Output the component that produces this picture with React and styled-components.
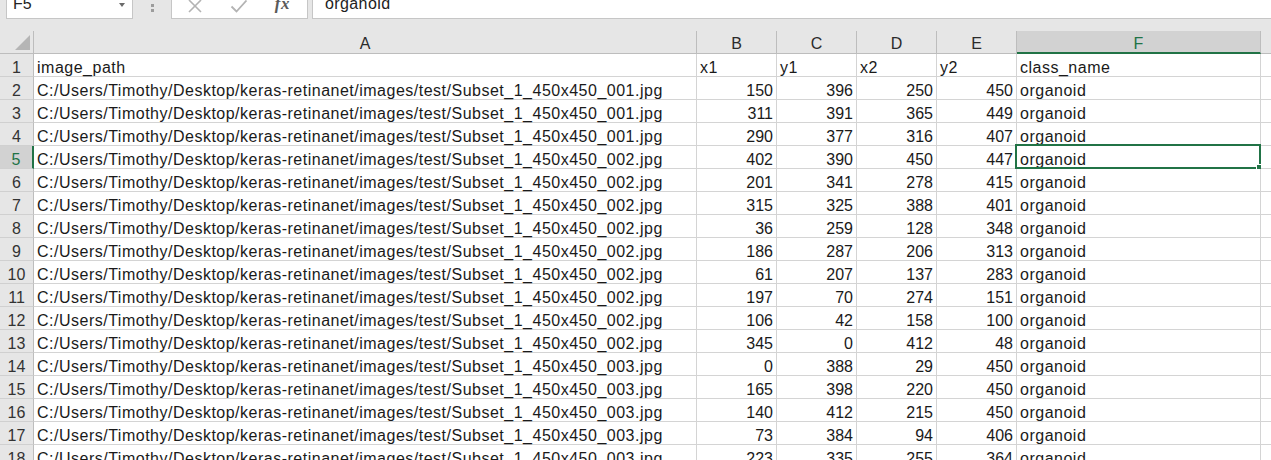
import React from "react";
import styled, { createGlobalStyle } from "styled-components";

const Global = createGlobalStyle`
  html, body { margin: 0; padding: 0; background: #e6e6e6; overflow: hidden; }
  body { width: 1271px; height: 460px; font-family: "Liberation Sans", Arial, sans-serif; }
  #root { width: 1271px; height: 460px; overflow: hidden; }
`;

const Page = styled.div`
  width: 1271px;
  height: 460px;
  overflow: hidden;
  background: #e6e6e6;
  display: flex;
  flex-direction: column;
`;

const FormulaBar = styled.div`
  display: flex;
  align-items: stretch;
  height: 31px;
  margin-top: -12px;
  flex: none;
`;

const Box = styled.div`
  box-sizing: border-box;
  background: #ffffff;
  border: 1px solid #c6c6c6;
  display: flex;
  align-items: center;
  position: relative;
`;

const NameBox = styled(Box)`
  margin-left: 6px;
  width: 127px;
  padding-left: 6px;
  font-size: 16px;
  color: #222;
`;

const DropArrow = styled.span`
  position: absolute;
  right: 7px;
  top: 14px;
  width: 0;
  height: 0;
  border-left: 3.5px solid transparent;
  border-right: 3.5px solid transparent;
  border-top: 4px solid #6a6a6a;
`;

const Grip = styled.div`
  width: 38px;
  display: flex;
  flex-direction: column;
  align-items: center;
  justify-content: center;
  gap: 2px;
  padding-top: 8px;
  box-sizing: border-box;
  & > span {
    width: 3px;
    height: 3px;
    background: #9c9c9c;
  }
`;

const ButtonsBox = styled(Box)`
  width: 137px;
  justify-content: space-between;
  padding: 0 14px 0 14px;
`;

const IconSlot = styled.span`
  display: flex;
  align-items: center;
  justify-content: center;
  width: 18px;
  height: 18px;
  margin-top: ${(p) => p.$dy || 0}px;
`;

const Fx = styled.span`
  font-family: "Liberation Serif", "Times New Roman", serif;
  font-style: italic;
  font-weight: bold;
  font-size: 17px;
  color: #5a5a5a;
  letter-spacing: 0.5px;
  margin-right: 3px;
`;

const FormulaInput = styled(Box)`
  margin-left: 4px;
  flex: 1;
  border-right: none;
  padding-left: 12px;
  font-size: 16px;
  letter-spacing: 0.4px;
  color: #222;
`;

const Gap = styled.div`
  height: 12px;
  flex: none;
`;

const Sheet = styled.div`
  flex: 1;
  display: flex;
  flex-direction: column;
  overflow: hidden;
`;

const Row = styled.div`
  display: flex;
  height: 23px;
  flex: none;
`;

const cellBase = `
  box-sizing: border-box;
  height: 23px;
  font-size: 16px;
  white-space: nowrap;
  overflow: hidden;
  flex: none;
`;

const Corner = styled.div`
  ${cellBase}
  width: 34px;
  background: #e6e6e6;
  border-right: 1px solid #bdbdbd;
  border-bottom: 1px solid #bdbdbd;
  position: relative;
  &::after {
    content: "";
    position: absolute;
    right: 3px;
    bottom: 3px;
    width: 0;
    height: 0;
    border-left: 15px solid transparent;
    border-bottom: 15px solid #b5b5b5;
  }
`;

const ColHead = styled.div`
  ${cellBase}
  width: ${(p) => p.$w}px;
  background: ${(p) => (p.$active ? "#d2d2d2" : "#e6e6e6")};
  color: ${(p) => (p.$active ? "#217346" : "#2b2b2b")};
  border-right: 1px solid #bdbdbd;
  border-bottom: ${(p) => (p.$active ? "2px solid #217346" : "1px solid #bdbdbd")};
  line-height: 25px;
  text-align: center;
`;

const RowHead = styled.div`
  ${cellBase}
  width: 34px;
  background: ${(p) => (p.$active ? "#d2d2d2" : "#e6e6e6")};
  color: ${(p) => (p.$active ? "#217346" : "#333")};
  border-right: ${(p) => (p.$active ? "2px solid #217346" : "1px solid #bdbdbd")};
  border-bottom: 1px solid #d0d0d0;
  line-height: 27px;
  text-align: center;
`;

const Cell = styled.div`
  ${cellBase}
  width: ${(p) => p.$w}px;
  background: #ffffff;
  color: #1a1a1a;
  border-right: 1px solid #d4d4d4;
  border-bottom: 1px solid #d4d4d4;
  line-height: 27px;
  text-align: ${(p) => (p.$num ? "right" : "left")};
  letter-spacing: ${(p) => (p.$num ? "0" : "0.5px")};
  padding: ${(p) => (p.$num ? "0 3px 0 0" : "0 0 0 3px")};
  position: relative;
  overflow: visible;
`;

const Selection = styled.div`
  position: absolute;
  left: -2px;
  top: -2px;
  right: -1px;
  bottom: -1px;
  border: 2px solid #217346;
  pointer-events: none;
  &::after {
    content: "";
    position: absolute;
    right: -4px;
    bottom: -4px;
    width: 5px;
    height: 5px;
    background: #217346;
    border: 1px solid #ffffff;
  }
`;

const widths = [663, 80, 80, 80, 80, 244, 120];
const letters = ["A", "B", "C", "D", "E", "F", "G"];

const data = [
  ["001", 150, 396, 250, 450],
  ["001", 311, 391, 365, 449],
  ["001", 290, 377, 316, 407],
  ["002", 402, 390, 450, 447],
  ["002", 201, 341, 278, 415],
  ["002", 315, 325, 388, 401],
  ["002", 36, 259, 128, 348],
  ["002", 186, 287, 206, 313],
  ["002", 61, 207, 137, 283],
  ["002", 197, 70, 274, 151],
  ["002", 106, 42, 158, 100],
  ["002", 345, 0, 412, 48],
  ["003", 0, 388, 29, 450],
  ["003", 165, 398, 220, 450],
  ["003", 140, 412, 215, 450],
  ["003", 73, 384, 94, 406],
  ["003", 223, 335, 255, 364],
];

const XIcon = () => (
  <svg width="16" height="16" viewBox="0 0 16 16">
    <path d="M2 2 L14 14 M14 2 L2 14" stroke="#b3b3b3" strokeWidth="1.6" fill="none" />
  </svg>
);

const CheckIcon = () => (
  <svg width="18" height="16" viewBox="0 0 18 16">
    <path d="M1.5 8.5 L6.5 13.5 L16.5 2.5" stroke="#b3b3b3" strokeWidth="1.8" fill="none" />
  </svg>
);

export default function App() {
  return (
    <Page>
      <Global />
      <FormulaBar>
        <NameBox>
          F5
          <DropArrow />
        </NameBox>
        <Grip>
          <span />
          <span />
        </Grip>
        <ButtonsBox>
          <IconSlot $dy={4}>
            <XIcon />
          </IconSlot>
          <IconSlot $dy={4}>
            <CheckIcon />
          </IconSlot>
          <Fx>fx</Fx>
        </ButtonsBox>
        <FormulaInput>organoid</FormulaInput>
      </FormulaBar>
      <Gap />
      <Sheet>
        <Row>
          <Corner />
          {letters.map((l, i) => (
            <ColHead key={l} $w={widths[i]} $active={l === "F"}>
              {l === "G" ? "" : l}
            </ColHead>
          ))}
        </Row>
        <Row>
          <RowHead>1</RowHead>
          <Cell $w={widths[0]}>image_path</Cell>
          <Cell $w={widths[1]}>x1</Cell>
          <Cell $w={widths[2]}>y1</Cell>
          <Cell $w={widths[3]}>x2</Cell>
          <Cell $w={widths[4]}>y2</Cell>
          <Cell $w={widths[5]}>class_name</Cell>
          <Cell $w={widths[6]} />
        </Row>
        {data.map((r, idx) => {
          const n = idx + 2;
          const active = n === 5;
          return (
            <Row key={n}>
              <RowHead $active={active}>{n}</RowHead>
              <Cell $w={widths[0]}>
                {`C:/Users/Timothy/Desktop/keras-retinanet/images/test/Subset_1_450x450_${r[0]}.jpg`}
              </Cell>
              <Cell $w={widths[1]} $num>{r[1]}</Cell>
              <Cell $w={widths[2]} $num>{r[2]}</Cell>
              <Cell $w={widths[3]} $num>{r[3]}</Cell>
              <Cell $w={widths[4]} $num>{r[4]}</Cell>
              <Cell $w={widths[5]}>
                organoid
                {active && <Selection />}
              </Cell>
              <Cell $w={widths[6]} />
            </Row>
          );
        })}
      </Sheet>
    </Page>
  );
}
